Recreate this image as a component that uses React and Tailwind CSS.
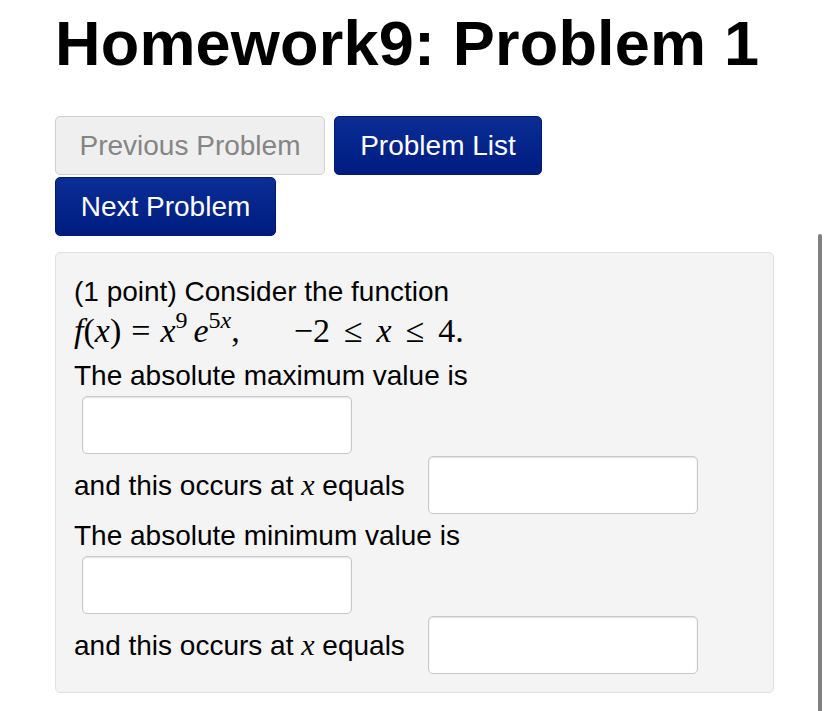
import React from 'react';

function Answer() {
  return (
    <input
      type="text"
      className="h-[58px] w-[270px] rounded-[5px] border border-[#c8c8c8] bg-white shadow-[inset_0_1px_2px_rgba(0,0,0,0.12)] outline-none"
    />
  );
}

function X() {
  return <span className="font-['Liberation_Serif'] italic text-[30px]">x</span>;
}

export default function App() {
  return (
    <div className="relative min-h-[711px] bg-white text-black font-['Liberation_Sans',Arial,sans-serif]">
      <div className="pl-[55px] pr-[55px] pt-[7px]">
        <h1 className="text-[63px] font-bold leading-[72px] tracking-[0.2px]">Homework9: Problem 1</h1>

        <div className="mt-[37px] flex flex-wrap gap-x-[9px] gap-y-[2px] w-[500px]">
          <button className="h-[59px] w-[270px] rounded-[5px] border border-[#d0d0d0] bg-[#efefef] text-[28px] text-[#858585]">
            Previous Problem
          </button>
          <button className="h-[59px] w-[208px] rounded-[5px] border border-[#001a70] bg-gradient-to-b from-[#0b2e95] to-[#001b80] text-[28px] text-white">
            Problem List
          </button>
          <button className="h-[59px] w-[221px] rounded-[5px] border border-[#001a70] bg-gradient-to-b from-[#0b2e95] to-[#001b80] text-[28px] text-white">
            Next Problem
          </button>
        </div>

        <div className="mt-[16px] w-[719px] rounded-[5px] border border-[#e0e0e0] bg-[#f4f4f4] pl-[18px] pt-[23px] pb-[18px] text-[28px] leading-[32px]">
          <div>(1 point) Consider the function</div>
          <div className="font-['Liberation_Serif',serif] text-[34px] leading-[46px] whitespace-nowrap">
            <i>f</i>(<i>x</i>)<span className="mx-[10px]">=</span>
            <i>x</i>
            <sup className="text-[24px] relative top-[-14px]">9</sup>
            <i className="ml-[6px]">e</i>
            <sup className="text-[24px] relative top-[-14px]">
              5<i>x</i>
            </sup>
            ,<span className="inline-block w-[54px]" />−2<span className="mx-[14px]">≤</span>
            <i>x</i>
            <span className="mx-[14px]">≤</span>4.
          </div>
          <div className="mt-[6px]">The absolute maximum value is</div>
          <div className="mt-[4px] pl-[8px]">
            <Answer />
          </div>
          <div className="mt-[2px] flex items-center">
            <span>
              and this occurs at <X /> equals
            </span>
            <span className="ml-[23px]">
              <Answer />
            </span>
          </div>
          <div className="mt-[6px]">The absolute minimum value is</div>
          <div className="mt-[4px] pl-[8px]">
            <Answer />
          </div>
          <div className="mt-[2px] flex items-center">
            <span>
              and this occurs at <X /> equals
            </span>
            <span className="ml-[23px]">
              <Answer />
            </span>
          </div>
        </div>
      </div>
      <div className="absolute right-[6px] top-[234px] bottom-0 w-[4px] rounded-t-full bg-[#808080]" />
    </div>
  );
}
